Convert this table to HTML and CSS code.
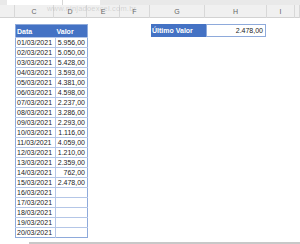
FILE: index.html
```html
<!DOCTYPE html>
<html lang="pt-BR">
<head>
    <meta charset="UTF-8">
    <title>Último Valor</title>
    <link rel="stylesheet" href="styles.css">
</head>
<body>
    <div class="excel">
        <!-- barra de fórmulas (só a borda inferior aparece) -->
        <div class="formula-bar">
            <div class="name-box"></div>
            <div class="formula-box"></div>
        </div>

        <!-- cabeçalho das colunas -->
        <div class="col-headers">
            <div class="col-head"></div>
            <div class="col-head">C</div>
            <div class="col-head">D</div>
            <div class="col-head">E</div>
            <div class="col-head">F</div>
            <div class="col-head">G</div>
            <div class="col-head">H</div>
            <div class="col-head">I</div>
            <div class="col-head"></div>
        </div>

        <div class="sheet">
            <table class="dados">
                <thead>
                    <tr><th>Data</th><th>Valor</th></tr>
                </thead>
                <tbody>
                    <tr><td>01/03/2021</td><td class="num">5.956,00</td></tr>
                    <tr><td>02/03/2021</td><td class="num">5.050,00</td></tr>
                    <tr><td>03/03/2021</td><td class="num">5.428,00</td></tr>
                    <tr><td>04/03/2021</td><td class="num">3.593,00</td></tr>
                    <tr><td>05/03/2021</td><td class="num">4.381,00</td></tr>
                    <tr><td>06/03/2021</td><td class="num">4.598,00</td></tr>
                    <tr><td>07/03/2021</td><td class="num">2.237,00</td></tr>
                    <tr><td>08/03/2021</td><td class="num">3.286,00</td></tr>
                    <tr><td>09/03/2021</td><td class="num">2.293,00</td></tr>
                    <tr><td>10/03/2021</td><td class="num">1.116,00</td></tr>
                    <tr><td>11/03/2021</td><td class="num">4.059,00</td></tr>
                    <tr><td>12/03/2021</td><td class="num">1.210,00</td></tr>
                    <tr><td>13/03/2021</td><td class="num">2.359,00</td></tr>
                    <tr><td>14/03/2021</td><td class="num">762,00</td></tr>
                    <tr><td>15/03/2021</td><td class="num">2.478,00</td></tr>
                    <tr><td>16/03/2021</td><td class="num"></td></tr>
                    <tr><td>17/03/2021</td><td class="num"></td></tr>
                    <tr><td>18/03/2021</td><td class="num"></td></tr>
                    <tr><td>19/03/2021</td><td class="num"></td></tr>
                    <tr><td>20/03/2021</td><td class="num"></td></tr>
                </tbody>
            </table>

            <div class="ultimo">
                <div class="ultimo-label">Último Valor</div>
                <div class="ultimo-valor">2.478,00</div>
            </div>
        </div>

        <div class="scroll-bar"></div>

        <div class="marca">www.ninjadoexcel.com.br</div>
    </div>
</body>
</html>
```

FILE: styles.css
```css
/* Planilha estilo Excel */
body {
    margin: 0;
    background-color: #fff;
    font-family: "Liberation Sans", Arial, sans-serif;
}
.excel {
    position: relative;
    width: 300px;
    height: 244px;
    overflow: hidden;
    display: flex;
    flex-direction: column;
}
.formula-bar {
    display: flex;
    height: 5px;
    background-color: #e9e9e9;
    padding-left: 7px;
}
.name-box {
    width: 55px;
    background-color: #fff;
    border-right: 1px solid #d6d6d6;
}
.formula-box {
    width: 37px;
    background-color: #fff;
}
.col-headers {
    display: grid;
    grid-template-columns: 15px 39px 33px 33px 30px 55px 62px 28px 5px;
    height: 12px;
    background-color: #f0f0f0;
    border-bottom: 1px solid #d2d2d2;
}
.col-head {
    border-right: 1px solid #d8d8d8;
    font-size: 7px;
    line-height: 13px;
    color: #666;
    text-align: center;
}
.sheet {
    flex: 1;
    display: flex;
    align-items: flex-start;
    padding: 6px 0 0 15px;
}
.dados {
    border-collapse: collapse;
    border: 1px solid #8eaadb;
    font-size: 7px;
    color: #222;
}
.dados th,
.dados td {
    padding: 0 1px;
    white-space: nowrap;
}
.dados th {
    height: 12px;
    background-color: #4472c4;
    color: #fff;
    text-align: left;
    font-weight: bold;
}
.dados td {
    height: 9px;
    line-height: 9px;
    border-top: 1px solid #b4c6e7;
}
.dados td:first-child {
    width: 37px;
    border-right: 1px solid #b4c6e7;
}
.dados td.num {
    width: 28px;
    text-align: right;
    padding-right: 2px;
}
.ultimo {
    display: flex;
    height: 13px;
    margin-left: 63px;
    font-size: 7px;
    line-height: 13px;
}
.ultimo-label {
    width: 54px;
    padding-left: 1px;
    background-color: #4472c4;
    color: #fff;
    font-weight: bold;
}
.ultimo-valor {
    width: 56px;
    padding-right: 2px;
    border: 1px solid #8eaadb;
    line-height: 11px;
    text-align: right;
    color: #222;
}
.scroll-bar {
    height: 2px;
    margin-left: 29px;
    background-color: #c8c8c8;
}
/* marca d'água sobre a planilha */
.marca {
    position: absolute;
    left: 47px;
    top: 4px;
    font-size: 7.5px;
    letter-spacing: 0.2px;
    color: rgba(140, 140, 140, 0.3);
}
```
